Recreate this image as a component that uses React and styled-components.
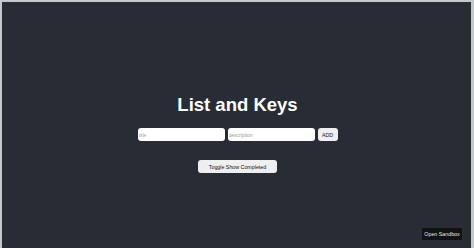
import React, {useState} from 'react';
import styled, {createGlobalStyle} from "styled-components";

const GlobalStyle = createGlobalStyle`
  html, body {
    margin: 0;
    padding: 0;
    background: #282c34;
  }
  * {
    box-sizing: border-box;
  }
`;

const StyledFrame = styled.div`
  position: relative;
  width: 474px;
  height: 248px;
  border-top: 2px solid #c6c7c9;
  border-left: 2px solid #c6c7c9;
  border-right: 3px solid #c6c7c9;
  background: #282c34;
  font-family: "Liberation Sans", Arial, sans-serif;
  overflow: hidden;
`;

const StyledApp = styled.div`
  display: flex;
  flex-direction: column;
  align-items: center;
  padding-top: 93px;
  padding-left: 2px;
`;

const Title = styled.h1`
  margin: 0;
  font-size: 18.5px;
  line-height: 20px;
  font-weight: 700;
  color: #ffffff;
`;

const AddForm = styled.form`
  display: flex;
  gap: 3px;
  margin-top: 13px;
  height: 13px;
`;

const TextInput = styled.input`
  width: 87px;
  height: 13px;
  padding: 0 1px;
  border: none;
  border-radius: 3px;
  background: #ffffff;
  font-family: "Liberation Sans", Arial, sans-serif;
  font-size: 5px;
  color: #222;
  outline: none;

  &::placeholder {
    color: #a0a0a0;
  }
`;

const Button = styled.button`
  height: 13px;
  width: ${({$width}) => $width}px;
  padding: 0;
  border: none;
  border-radius: 3px;
  background: #efefef;
  color: #111;
  font-family: "Liberation Sans", Arial, sans-serif;
  font-size: 5.3px;
  cursor: pointer;
`;

const ToggleButton = styled(Button)`
  margin-top: 19px;
`;

const SandboxLink = styled.a`
  position: absolute;
  right: 9px;
  bottom: 8px;
  width: 40px;
  height: 12px;
  display: flex;
  align-items: center;
  justify-content: center;
  background: #111214;
  border-radius: 1px;
  color: #e8e8e8;
  font-size: 5.3px;
  text-decoration: none;
`;

const App = () => {
    const [title, setTitle] = useState('');
    const [description, setDescription] = useState('');

    return (
        <StyledFrame>
            <GlobalStyle/>
            <StyledApp>
                <Title>List and Keys</Title>
                <AddForm onSubmit={(e) => e.preventDefault()}>
                    <TextInput placeholder={'title'} value={title} onChange={(e) => setTitle(e.target.value)}/>
                    <TextInput placeholder={'description'} value={description}
                               onChange={(e) => setDescription(e.target.value)}/>
                    <Button $width={20} type={'submit'}>ADD</Button>
                </AddForm>
                <ToggleButton $width={79} type={'button'}>Toggle Show Completed</ToggleButton>
            </StyledApp>
            <SandboxLink href={'#'}>Open Sandbox</SandboxLink>
        </StyledFrame>
    );
};

export default App;
